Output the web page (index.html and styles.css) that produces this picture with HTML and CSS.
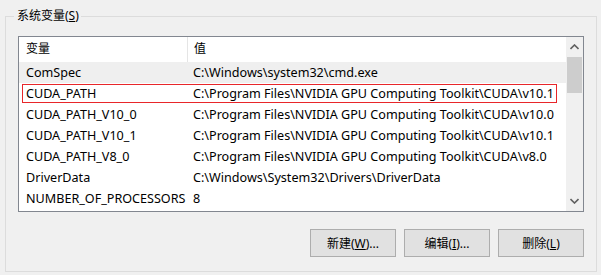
FILE: index.html
```html
<!DOCTYPE html>
<html lang="zh-CN">
<head>
    <meta charset="UTF-8">
    <title>系统变量</title>
    <link rel="stylesheet" href="styles.css">
</head>
<body>
    <div class="group">
        <div class="group-title">系统变量(<u>S</u>)</div>
        <div class="list">
            <div class="table">
                <div class="row head">
                    <span class="name">变量</span>
                    <span class="value">值</span>
                </div>
                <div class="row hover">
                    <span class="name">ComSpec</span>
                    <span class="value">C:\Windows\system32\cmd.exe</span>
                </div>
                <div class="row marked">
                    <span class="name">CUDA_PATH</span>
                    <span class="value">C:\Program Files\NVIDIA GPU Computing Toolkit\CUDA\v10.1</span>
                </div>
                <div class="row">
                    <span class="name">CUDA_PATH_V10_0</span>
                    <span class="value">C:\Program Files\NVIDIA GPU Computing Toolkit\CUDA\v10.0</span>
                </div>
                <div class="row">
                    <span class="name">CUDA_PATH_V10_1</span>
                    <span class="value">C:\Program Files\NVIDIA GPU Computing Toolkit\CUDA\v10.1</span>
                </div>
                <div class="row">
                    <span class="name">CUDA_PATH_V8_0</span>
                    <span class="value">C:\Program Files\NVIDIA GPU Computing Toolkit\CUDA\v8.0</span>
                </div>
                <div class="row">
                    <span class="name">DriverData</span>
                    <span class="value">C:\Windows\System32\Drivers\DriverData</span>
                </div>
                <div class="row">
                    <span class="name">NUMBER_OF_PROCESSORS</span>
                    <span class="value">8</span>
                </div>
            </div>
            <div class="scrollbar">
                <div class="arrow">
                    <svg width="9" height="6" viewBox="0 0 9 6"><path d="M0.5 5 L4.5 1 L8.5 5" fill="none" stroke="#606060" stroke-width="1.6"/></svg>
                </div>
                <div class="thumb"></div>
                <div class="track"></div>
                <div class="arrow">
                    <svg width="9" height="6" viewBox="0 0 9 6"><path d="M0.5 1 L4.5 5 L8.5 1" fill="none" stroke="#606060" stroke-width="1.6"/></svg>
                </div>
            </div>
        </div>
        <div class="buttons">
            <button>新建(<u>W</u>)...</button>
            <button>编辑(<u>I</u>)...</button>
            <button>删除(<u>L</u>)</button>
        </div>
    </div>
</body>
</html>
```

FILE: styles.css
```css
body {
    margin: 0;
    padding: 16px 4px 3px 5px;
    background-color: #f0f0f0;
    font-family: "Noto Sans", "Noto Sans CJK SC", sans-serif;
    font-size: 12px;
    color: #000;
}
.group {
    border: 1px solid #dcdcdc;
    height: 254px;
    padding: 0 12px 0 12px;
}
.group-title {
    width: fit-content;
    margin: -9px 0 0 -4px;
    padding: 0 2px 0 3px;
    line-height: 16px;
    background-color: #f0f0f0;
}
.list {
    margin-top: 12px;
    height: 174px;
    border: 1px solid #828790;
    background-color: #fff;
    display: flex;
}
.table {
    flex: 1;
}
.row {
    display: flex;
    height: 21px;
    line-height: 21px;
    font-size: 12.6px;
    white-space: nowrap;
    position: relative;
}
.row .name {
    width: 161px;
    padding-left: 7px;
}
.row .value {
    padding-left: 6px;
}
.head {
    height: 25px;
    line-height: 24px;
    font-size: 12px;
}
.head .name {
    border-right: 1px solid #e5e5e5;
}
.hover {
    background-color: #efefef;
}
.marked::after {
    content: "";
    position: absolute;
    left: 3px;
    right: 9px;
    top: 1px;
    bottom: 1px;
    border: 1px solid #e8262a;
}
.scrollbar {
    width: 17px;
    background-color: #f0f0f0;
    display: flex;
    flex-direction: column;
}
.arrow {
    height: 20px;
    display: flex;
    align-items: center;
    justify-content: center;
}
.thumb {
    height: 36px;
    margin: 0 1px;
    background-color: #cdcdcd;
}
.track {
    flex: 1;
}
.buttons {
    margin-top: 17px;
    display: flex;
    justify-content: flex-end;
    gap: 8px;
}
.buttons button {
    width: 86px;
    height: 28px;
    padding: 0;
    border: 1px solid #adadad;
    background-color: #e1e1e1;
    font-family: inherit;
    font-size: 12px;
    color: #000;
}
```
